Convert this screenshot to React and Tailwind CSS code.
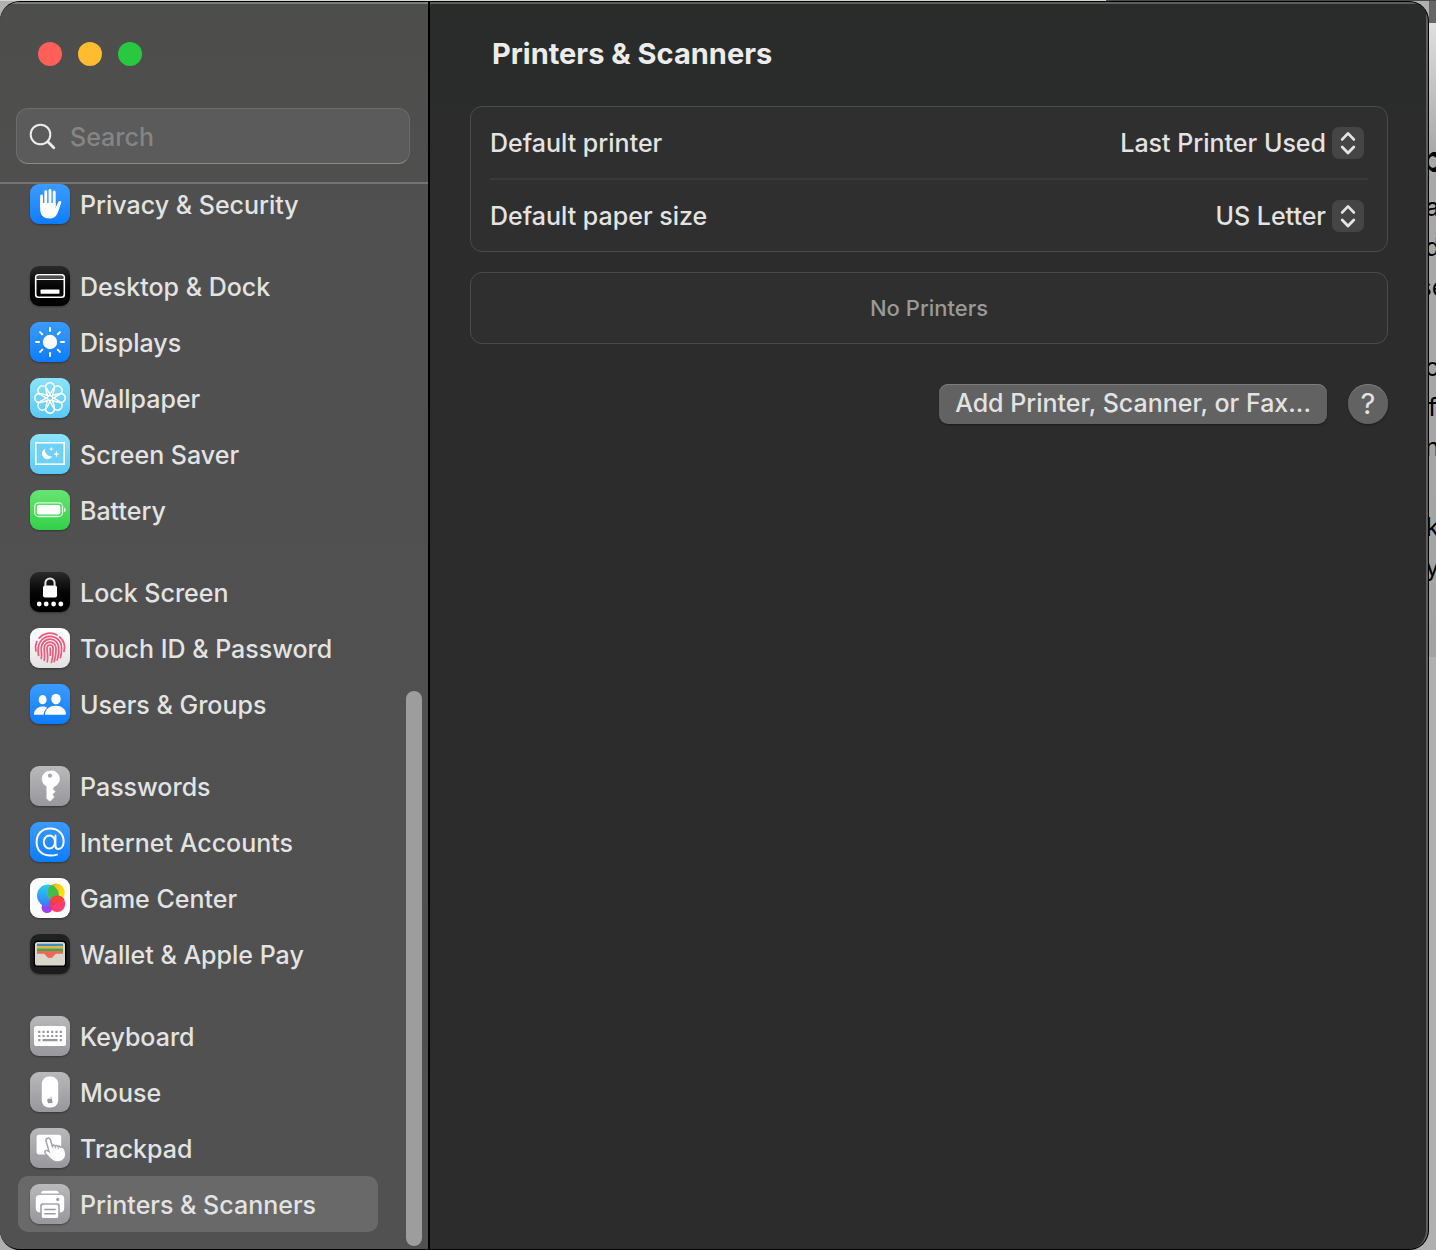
import React, { useState } from 'react'

const BLUE = 'from-[#3a9bff] to-[#0a7cff]'
const SKY = 'from-[#8ae4fb] to-[#5ac8f5]'
const GRAY = 'from-[#b9b9bb] to-[#97979c]'
const BLACK = 'from-[#2b2b2b] via-[#060606] to-black'

const HandGlyph = () => (
  <g fill="none" stroke="#fff" strokeWidth="2.900" strokeLinecap="round">
    <path d="M11.600 12V23M15.800 7.600V22M20 6.400V22M24.200 8V22" />
    <path d="M29.800 18.400L27.200 24" />
    <path
      d="M10.200 19h15.400v5l2.900-5.800 2.500 1-2.800 8.200c-1.400 4.600-4.200 7-8.600 7-5.800 0-9.400-3.200-9.400-9z"
      fill="#fff"
      stroke="none"
    />
  </g>
)

const DockGlyph = () => (
  <g>
    <rect x="5.700" y="8.700" width="28.600" height="22.600" rx="2.800" fill="none" stroke="#fff" strokeWidth="1.600" />
    <path d="M6 11h28" stroke="#8e8e8e" strokeWidth="1.200" />
    <path d="M6 13.400h28" stroke="#fff" strokeWidth="1.200" />
    <rect x="10.500" y="23.600" width="19" height="4.200" rx="0.800" fill="#fff" />
  </g>
)

const RAYS = [0, 45, 90, 135, 180, 225, 270, 315]

const SunGlyph = () => (
  <g>
    <circle cx="20" cy="20" r="7.200" fill="#fff" />
    {RAYS.map((deg) => (
      <path
        key={deg}
        d="M20 6v3"
        stroke="#fff"
        strokeWidth="2"
        strokeLinecap="round"
        transform={`rotate(${deg} 20 20)`}
      />
    ))}
  </g>
)

const FlowerGlyph = () => (
  <g fill="none" stroke="#fff" strokeWidth="1.500">
    {RAYS.map((deg) => (
      <path
        key={deg}
        d="M17.800 18.600L15.800 11.400C14.600 7.200 17 4.800 20 4.800s5.400 2.400 4.200 6.600L22.200 18.600"
        transform={`rotate(${deg} 20 20)`}
      />
    ))}
    <circle cx="20" cy="20" r="2.600" />
  </g>
)

const ScreenSaverGlyph = () => (
  <g>
    <rect x="5.800" y="8.800" width="28.400" height="21.400" fill="#6fd0f7" stroke="#fff" strokeWidth="1.600" />
    <path d="M15.400 14.400a5.600 5.600 0 1 0 7 7.800 6 6 0 0 1-7-7.800z" fill="#fff" />
    <path d="M21.300 12.600l.6 1.900 1.900.6-1.900.6-.6 1.900-.6-1.900-1.900-.6 1.900-.6z" fill="#fff" />
    <path d="M26.400 16.800l.8 2.500 2.500.8-2.500.8-.8 2.500-.8-2.500-2.500-.8 2.500-.8z" fill="#fff" />
  </g>
)

const BatteryGlyph = () => (
  <g>
    <rect x="4.700" y="12.900" width="27.800" height="13.600" rx="4" fill="none" stroke="#d9f9dc" strokeWidth="1.300" />
    <rect x="6.800" y="15" width="23.600" height="9.400" rx="2.200" fill="#fff" />
    <path d="M34 17.400c2.400.8 2.400 4 0 4.800z" fill="#d9f9dc" />
  </g>
)

const LockGlyph = () => (
  <g>
    <rect x="13" y="13.600" width="14" height="12" rx="2" fill="#fff" />
    <path d="M15.400 14v-3a4.600 4.600 0 0 1 9.200 0v3" fill="none" stroke="#e6e6e6" strokeWidth="2" />
    {[9.200, 16.200, 23.600, 30.800].map((x) => (
      <circle key={x} cx={x} cy="32" r="2.400" fill="#fff" />
    ))}
  </g>
)

// nested ridges, outermost first
const FingerprintGlyph = () => (
  <g fill="none" stroke="#f2587a" strokeWidth="1.700" strokeLinecap="round">
    <path d="M9 10.200A14.600 14.600 0 0 1 27 7M29.600 8.800A14.600 14.600 0 0 1 34 23.500M6.800 13.600A14.600 14.600 0 0 0 5.800 23" />
    <path d="M8.600 27.500C6.200 16 12 8.300 20 8.300c6.600 0 11.600 5 11.600 11.700 0 3.500-.3 7-1.200 9.600" />
    <path d="M11.300 30.500c.8-3 0-6-.1-9C11 15.500 15 11.200 20 11.200s8.800 4 8.800 8.800c0 4.500-.4 8.600-1.700 12" />
    <path d="M14.200 32.400c1-4-.1-8-.1-11.800 0-3.600 2.600-6.500 5.900-6.500s6 2.800 6 6c0 5-.4 9.400-1.900 13.500" />
    <path d="M17.300 33.900c1-4.500-.2-9.500-.2-13.700 0-1.800 1.300-3.200 2.900-3.200s3 1.400 3.100 3.100c.1 5-.3 9.800-1.700 14.300" />
    <path d="M20.100 20.200c.2 2.400.3 4.600.1 7" />
  </g>
)

const UsersGlyph = () => (
  <g fill="#fff">
    <ellipse cx="12.600" cy="15.700" rx="4" ry="4.600" />
    <path d="M4 30.800c0-4.600 3.400-8.200 8.400-8.200 2 0 3.600.5 4.800 1.400-2 1.600-3.400 3.800-3.600 6.800z" />
    <ellipse cx="26" cy="15" rx="4.700" ry="5.300" />
    <path d="M15.800 30.800c-.8 0-1-.6-.8-1.400.8-4.400 4.800-7.600 10.800-7.600s9.600 3.200 10.200 7.600c0 .8-.2 1.400-1 1.400z" />
  </g>
)

const KeyGlyph = () => (
  <g>
    <path
      d="M20 5a8 8 0 0 0-3.200 15.300V32.400l2.400 2.400h1.400l3.600-3.800-2-2.600 3-2.800-2.600-2.600 1.600-2.600A8 8 0 0 0 20 5z"
      fill="#fff"
      stroke="#fff"
      strokeWidth="0.600"
      strokeLinejoin="round"
    />
    <circle cx="20" cy="9.700" r="2.100" fill="#a9a9ac" />
  </g>
)

const AtGlyph = () => (
  <g fill="none" stroke="#fff" strokeWidth="2" strokeLinecap="round">
    <ellipse cx="19.400" cy="20" rx="5.600" ry="6.600" />
    <path d="M25.400 13.600v9.800c0 2.300 1.200 3.500 3 3.500 3 0 5.200-3 5.200-7.300 0-7.600-5.200-13-13.400-13C12 6.600 6.600 12 6.600 20.200c0 8.400 5.600 13.400 14 13.400 2.500 0 4.600-.3 6.400-1" />
  </g>
)

const GameCenterGlyph = () => (
  <g>
    <defs>
      <linearGradient id="gcBlue" x1="0" y1="0" x2="0" y2="1">
        <stop offset="0" stopColor="#22d0fb" />
        <stop offset="1" stopColor="#3a78f2" />
      </linearGradient>
      <linearGradient id="gcYellow" x1="0" y1="0" x2="1" y2="1">
        <stop offset="0" stopColor="#ff9a1c" />
        <stop offset="0.500" stopColor="#ffd60a" />
        <stop offset="1" stopColor="#fbe51a" />
      </linearGradient>
      <clipPath id="gcClip">
        <circle cx="18" cy="17.600" r="11" />
      </clipPath>
    </defs>
    <circle cx="17" cy="29.600" r="5.400" fill="#a13cf5" />
    <circle cx="18" cy="17.600" r="11" fill="url(#gcBlue)" />
    <circle cx="26" cy="14.400" r="8.800" fill="url(#gcYellow)" />
    <circle cx="26" cy="14.400" r="8.800" fill="#42bd4a" clipPath="url(#gcClip)" />
    <circle cx="27.200" cy="26" r="8" fill="#ff2d62" fillOpacity="0.920" />
    <path d="M20.400 21.800a8 8 0 0 1 14-.5 8.800 8.800 0 0 1-14 .5z" fill="#f5443b" />
  </g>
)

const WalletGlyph = () => (
  <g>
    <rect x="3.500" y="6.500" width="33" height="26.500" rx="4" fill="#000" />
    <rect x="5" y="8" width="30" height="23.500" rx="2.600" fill="#d9d6cb" />
    <path d="M7 9.800h26v2.400H7z" fill="#3b8cc4" />
    <path d="M7 12.200h26v2.400H7z" fill="#f0b02b" />
    <path d="M7 14.600h26V17H7z" fill="#3aab4a" />
    <path d="M7 17h26v2.800h-6c-1.400 0-2 .6-2.800 1.600-1.200 1.600-2.400 2.600-4.200 2.600s-3-1-4.200-2.600c-.8-1-1.400-1.600-2.800-1.600H7z" fill="#f1665b" />
  </g>
)

const KeyboardGlyph = () => (
  <g>
    <rect x="4" y="10" width="32" height="20" rx="2.600" fill="#fff" />
    <g stroke="#98989c" strokeWidth="2.200" fill="none">
      <path d="M8.200 15.800h23.800M8.200 20h23.800" strokeDasharray="2.200 2.100" />
      <path d="M8.200 24.200h2.200M12.500 24.200h15M29.700 24.200h2.200" />
    </g>
  </g>
)

const MouseGlyph = () => (
  <g>
    <rect x="11.800" y="4.600" width="16.400" height="31" rx="7" fill="#fff" />
    <path d="M20.200 26.200c0-1 .6-1.600 1.400-1.800 0 1-.6 1.700-1.400 1.800zM19.900 26.800c.6 0 1-.4 1.700-.3.400 0 .8.300 1 .6-.9.700-.8 2 .2 2.500-.3.900-.9 1.600-1.500 1.600-.5 0-.7-.3-1.300-.3s-.8.300-1.300.3c-1.400-.3-2.400-4.500.1-4.700.5 0 .8.300 1.100.3z" fill="#98989c" />
  </g>
)

const TrackpadGlyph = () => (
  <g>
    <rect x="6.600" y="6.800" width="24.600" height="19.800" rx="2.400" fill="#fff" />
    <path
      d="M17.600 10.200c1.300-.4 2.400.4 2.800 1.700l1.800 5.700c.8-.6 2-.5 2.700.3.900-.6 2.100-.4 2.800.5 1-.5 2.100-.1 2.700.8 2.300-.6 3.800.5 4.600 2.700 1.500 4.400.9 8.600-2.600 10.700-4.400 2.300-9.400 1.300-12.600-2.300l-4.500-4.900c-.9-1.100-.5-2.500.7-2.900 1-.3 2 .1 3 .9l-3-10.400c-.4-1.300.3-2.400 1.600-2.800z"
      fill="#fff"
      stroke="#a4a4a8"
      strokeWidth="1.500"
    />
    <path d="M22.200 17.600l.8 2.600M25 18l.8 2.500M27.800 18.600l.7 2.200" stroke="#a4a4a8" strokeWidth="1" />
  </g>
)

const PrinterGlyph = () => (
  <g>
    <path d="M11 9.400c.2-1.600 1.400-2.600 3-2.600h12c1.600 0 2.800 1 3 2.600z" fill="#fff" />
    <path d="M9.400 11h21.200c2.200 0 3.600 1.400 3.600 3.600v10c0 2.400-1.400 3.800-3.600 3.800h-.8v-7c0-1.400-.8-2.200-2.200-2.200H12.400c-1.400 0-2.200.8-2.200 2.200v7h-.8c-2.200 0-3.600-1.400-3.600-3.800v-10C5.800 12.400 7.200 11 9.400 11z" fill="#fff" />
    <circle cx="27.800" cy="15.400" r="1.600" fill="#a1a1a5" />
    <rect x="11.800" y="20.800" width="16.400" height="13.200" rx="1.600" fill="#fff" />
    <path d="M14.800 25.400h10.400M14.800 29.800h10.400" stroke="#9c9ca0" strokeWidth="1.500" strokeLinecap="round" />
  </g>
)

// sidebar sections, each array is one visual group
const groups = [
  [{ label: 'Privacy & Security', tile: BLUE, Glyph: HandGlyph }],
  [
    { label: 'Desktop & Dock', tile: BLACK, Glyph: DockGlyph },
    { label: 'Displays', tile: BLUE, Glyph: SunGlyph },
    { label: 'Wallpaper', tile: SKY, Glyph: FlowerGlyph },
    { label: 'Screen Saver', tile: SKY, Glyph: ScreenSaverGlyph },
    { label: 'Battery', tile: 'from-[#65e572] to-[#30d149]', Glyph: BatteryGlyph },
  ],
  [
    { label: 'Lock Screen', tile: BLACK, Glyph: LockGlyph },
    { label: 'Touch ID & Password', tile: 'from-white to-[#e2e2e2]', Glyph: FingerprintGlyph },
    { label: 'Users & Groups', tile: BLUE, Glyph: UsersGlyph },
  ],
  [
    { label: 'Passwords', tile: GRAY, Glyph: KeyGlyph },
    { label: 'Internet Accounts', tile: BLUE, Glyph: AtGlyph },
    { label: 'Game Center', tile: 'from-white to-white', Glyph: GameCenterGlyph },
    { label: 'Wallet & Apple Pay', tile: 'from-[#222222] to-[#1c1c1c]', Glyph: WalletGlyph },
  ],
  [
    { label: 'Keyboard', tile: GRAY, Glyph: KeyboardGlyph },
    { label: 'Mouse', tile: GRAY, Glyph: MouseGlyph },
    { label: 'Trackpad', tile: GRAY, Glyph: TrackpadGlyph },
    { label: 'Printers & Scanners', tile: GRAY, Glyph: PrinterGlyph },
  ],
]

const SidebarItem = ({ item, active, onSelect }) => {
  const { label, tile, Glyph } = item
  return (
    <li>
      <a
        href="#"
        onClick={(e) => {
          e.preventDefault()
          onSelect(label)
        }}
        className={`flex h-14 items-center gap-[10px] rounded-[10px] px-3 ${active ? 'bg-[#696969]' : ''}`}
      >
        <span
          className={`size-10 shrink-0 overflow-hidden rounded-[9px] bg-linear-to-b shadow-[0_1px_2px_rgba(0,0,0,0.35)] ${tile}`}
        >
          <svg viewBox="0 0 40 40" className="size-10" aria-hidden="true">
            <Glyph />
          </svg>
        </span>
        <span className="pt-[2px] whitespace-nowrap">{label}</span>
      </a>
    </li>
  )
}

const SettingRow = ({ id, label, options }) => (
  <div className="flex h-[71px] items-center justify-between">
    <label htmlFor={id}>{label}</label>
    <div className="flex items-center gap-[6px] pr-1">
      <select id={id} className="field-sizing-content appearance-none bg-transparent text-right outline-none">
        {options.map((option) => (
          <option key={option}>{option}</option>
        ))}
      </select>
      <span className="pointer-events-none flex size-8 items-center justify-center rounded-[7px] bg-[#454545]">
        <svg viewBox="0 0 32 32" className="size-8" fill="none" stroke="#e4e4e4" strokeWidth="2.800" strokeLinecap="round" strokeLinejoin="round" aria-hidden="true">
          <path d="M10.200 12.400L16 6.400l5.800 6M10.200 20l5.800 6 5.800-6" />
        </svg>
      </span>
    </div>
  </div>
)

// slice of the document window that sits behind the settings window
const documentLines = ['a', 'd', 'se', '', 'o', 'f', 'n', '', 'k', 'y']

const App = () => {
  const [selected, setSelected] = useState('Printers & Scanners')

  return (
    <div className="flex h-screen flex-col overflow-hidden bg-[#b0b0b0] font-['Inter','Liberation_Sans',sans-serif] text-[25px] leading-8 font-medium text-[#e3e3e3]">
      {/* bottom edge of whatever is behind the window */}
      <div className="flex h-px shrink-0 bg-[#4a4a4a]">
        <div className="w-[77%] bg-[#d3d8d2]" />
      </div>

      <div className="flex min-h-0 flex-1">
        <div className="flex min-w-0 flex-1 overflow-hidden rounded-[20px] border-y border-r border-black bg-[#2c2c2c]">
          {/* sidebar */}
          <aside className="flex w-[430px] shrink-0 flex-col border-r-2 border-black bg-linear-to-b from-[#4d4d4c] via-[#505050] via-20% to-[#515151] shadow-[inset_0_2px_0_#7a7c7a]">
            <div className="flex h-[106px] shrink-0 items-center gap-4 pb-[2px] pl-[38px]">
              <button aria-label="Close" className="size-6 rounded-full bg-[#ff5f57]" />
              <button aria-label="Minimize" className="size-6 rounded-full bg-[#febc2e]" />
              <button aria-label="Zoom" className="size-6 rounded-full bg-[#28c840]" />
            </div>
            <div className="shrink-0 border-b-2 border-[#747474] pr-[18px] pb-[18px] pl-4">
              <label className="flex h-14 items-center gap-[14px] rounded-xl border border-[#6c6c6c] border-b-[#8a8a8a] bg-[#5b5b5b] px-[11px]">
                <svg viewBox="0 0 28 28" className="size-7 shrink-0" fill="none" stroke="#ececec" strokeLinecap="round" aria-hidden="true">
                  <circle cx="12.500" cy="12.500" r="9.800" strokeWidth="2" />
                  <path d="M19.800 19.800l6 6" strokeWidth="2.800" />
                </svg>
                <input
                  type="search"
                  aria-label="Search"
                  placeholder="Search"
                  className="w-full min-w-0 bg-transparent pt-[2px] outline-none placeholder:text-[#858585]"
                />
              </label>
            </div>
            <div className="flex min-h-0 flex-1">
              <nav className="flex min-w-0 flex-1 flex-col justify-end gap-[26px] overflow-hidden pr-[28px] pb-[17px] pl-[18px]">
                {groups.map((group) => (
                  <ul key={group[0].label}>
                    {group.map((item) => (
                      <SidebarItem
                        key={item.label}
                        item={item}
                        active={item.label === selected}
                        onSelect={setSelected}
                      />
                    ))}
                  </ul>
                ))}
              </nav>
              <div className="flex w-[22px] shrink-0 flex-col justify-end pb-[3px]">
                <div className="h-[52.3%] w-4 rounded-full bg-[#9d9d9d]" />
              </div>
            </div>
          </aside>

          {/* content */}
          <main className="min-w-0 flex-1 rounded-tr-[19px] rounded-br-[19px] border-t-2 border-r-2 border-[#5c5e5c]">
            <header className="flex h-[102px] items-center bg-[#2a2c2b] pb-[2px] pl-[62px]">
              <h1 className="text-[29px] font-bold text-[#ececec]">{selected}</h1>
            </header>
            <div className="flex flex-col gap-5 pr-[38px] pl-10">
              <section className="rounded-xl border border-[#4b4b4b] bg-[#2f2f2f] px-[19px]">
                <SettingRow id="default-printer" label="Default printer" options={['Last Printer Used']} />
                <hr className="border-t-2 border-[#3a3a3a]" />
                <SettingRow id="paper-size" label="Default paper size" options={['US Letter', 'A4']} />
              </section>
              <section className="flex h-[72px] items-center justify-center rounded-xl border border-[#4b4b4b] bg-[#2f2f2f] text-[22px] text-[#999999]">
                No Printers
              </section>
              <div className="flex items-center justify-end gap-[21px] pt-5">
                <button className="h-10 rounded-[9px] bg-[#626262] px-4 pb-[2px] whitespace-nowrap shadow-[inset_0_1px_0_#7c7c7c,0_1px_2px_rgba(0,0,0,0.4)]">
                  Add Printer, Scanner, or Fax...
                </button>
                <button
                  aria-label="Help"
                  className="size-10 rounded-full bg-[#626262] text-[29px] font-normal shadow-[inset_0_1px_0_#7c7c7c,0_1px_2px_rgba(0,0,0,0.4)]"
                >
                  ?
                </button>
              </div>
            </div>
          </main>
        </div>

        <div className="flex w-[7px] shrink-0 flex-col overflow-hidden font-normal text-black" aria-hidden="true">
          <div className="h-[22px] shrink-0 bg-[#666666]" />
          <div className="flex shrink-0 flex-col items-center bg-linear-to-b from-[#e0e0e0] via-[#a9a9a9] via-20% to-[#a2a2a2] pt-[116px] pb-[70px]">
            <b className="h-12 text-[36px] leading-10">p</b>
            {documentLines.map((line, index) => (
              <span key={index} className="h-10 leading-10">
                {line}
              </span>
            ))}
          </div>
        </div>
      </div>
    </div>
  )
}

export default App
